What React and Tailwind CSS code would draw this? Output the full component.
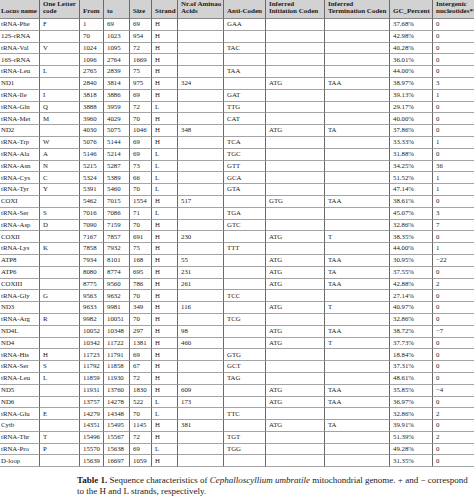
import React from "react";

const cols = "grid-cols-[42px_40px_24px_26px_22px_26px_46px_42px_59px_65px_43px_60px]";

const rows = [
  ["tRNA-Phe","F","1","69","69","H","","GAA","","","37.68%","0"],
  ["12S-rRNA","","70","1023","954","H","","","","","42.98%","0"],
  ["tRNA-Val","V","1024","1095","72","H","","TAC","","","40.28%","0"],
  ["16S-rRNA","","1096","2764","1669","H","","","","","36.01%","0"],
  ["tRNA-Leu","L","2765","2839","75","H","","TAA","","","44.00%","0"],
  ["ND1","","2840","3814","975","H","324","","ATG","TAA","38.97%","3"],
  ["tRNA-Ile","I","3818","3886","69","H","","GAT","","","39.13%","1"],
  ["tRNA-Gln","Q","3888","3959","72","L","","TTG","","","29.17%","0"],
  ["tRNA-Met","M","3960","4029","70","H","","CAT","","","40.00%","0"],
  ["ND2","","4030","5075","1046","H","348","","ATG","TA","37.86%","0"],
  ["tRNA-Trp","W","5076","5144","69","H","","TCA","","","33.33%","1"],
  ["tRNA-Ala","A","5146","5214","69","L","","TGC","","","31.88%","0"],
  ["tRNA-Asn","N","5215","5287","73","L","","GTT","","","34.25%","36"],
  ["tRNA-Cys","C","5324","5389","66","L","","GCA","","","51.52%","1"],
  ["tRNA-Tyr","Y","5391","5460","70","L","","GTA","","","47.14%","1"],
  ["COXI","","5462","7015","1554","H","517","","GTG","TAA","38.61%","0"],
  ["tRNA-Ser","S","7016","7086","71","L","","TGA","","","45.07%","3"],
  ["tRNA-Asp","D","7090","7159","70","H","","GTC","","","32.86%","7"],
  ["COXII","","7167","7857","691","H","230","","ATG","T","38.35%","0"],
  ["tRNA-Lys","K","7858","7932","75","H","","TTT","","","44.00%","1"],
  ["ATP8","","7934","8101","168","H","55","","ATG","TAA","30.95%","\u221222"],
  ["ATP6","","8080","8774","695","H","231","","ATG","TA","37.55%","0"],
  ["COXIII","","8775","9560","786","H","261","","ATG","TAA","42.88%","2"],
  ["tRNA-Gly","G","9563","9632","70","H","","TCC","","","27.14%","0"],
  ["ND3","","9633","9981","349","H","116","","ATG","T","40.97%","0"],
  ["tRNA-Arg","R","9982","10051","70","H","","TCG","","","32.86%","0"],
  ["ND4L","","10052","10348","297","H","98","","ATG","TAA","38.72%","\u22127"],
  ["ND4","","10342","11722","1381","H","460","","ATG","T","37.73%","0"],
  ["tRNA-His","H","11723","11791","69","H","","GTG","","","18.84%","0"],
  ["tRNA-Ser","S","11792","11858","67","H","","GCT","","","37.31%","0"],
  ["tRNA-Leu","L","11859","11930","72","H","","TAG","","","48.61%","0"],
  ["ND5","","11931","13760","1830","H","609","","ATG","TAA","35.85%","\u22124"],
  ["ND6","","13757","14278","522","L","173","","ATG","TAA","36.97%","0"],
  ["tRNA-Glu","E","14279","14348","70","L","","TTC","","","32.86%","2"],
  ["Cytb","","14351","15495","1145","H","381","","ATG","TA","39.91%","0"],
  ["tRNA-Thr","T","15496","15567","72","H","","TGT","","","51.39%","2"],
  ["tRNA-Pro","P","15570","15638","69","L","","TGG","","","49.28%","0"],
  ["D-loop","","15639","16697","1059","H","","","","","31.35%","0"],
];

const headers = [
  ["Locus name"],
  ["One Letter", "code"],
  ["From"],
  ["to"],
  ["Size"],
  ["Strand"],
  ["Nr.of Aminao", "Acids"],
  ["Anti-Coden"],
  ["Inferred", "Initiation Coden"],
  ["Inferred", "Termination Coden"],
  ["GC_Percent"],
  ["Intergenic", "nucleotides**"],
];

export default function App() {
  return (
    <div
      className="w-[474px] h-[500px] overflow-hidden bg-white text-[#1a1a1a]"
      style={{ fontFamily: '"Liberation Serif", "DejaVu Serif", serif' }}
    >
      <div className={`grid ${cols} ml-[-3px] w-max border-l border-[#6a6a6a]`}>
        {headers.map((h, i) => (
          <div
            key={"h" + i}
            className="h-[19px] bg-[#d2d2d2] border-r border-b border-r-[#6a6a6a] border-b-[#8a8a8a] flex flex-col justify-end pb-[2px] pl-[3px] text-[7px] leading-[7.6px] font-bold whitespace-nowrap overflow-hidden"
          >
            {h.map((t, j) => <span key={j}>{t}</span>)}
          </div>
        ))}
        {rows.map((r, ri) =>
          r.map((c, ci) => (
            <div
              key={ri + "-" + ci}
              className="h-[11.8px] border-r border-b-[1.5px] border-r-[#6a6a6a] border-b-[#a4a4a4] flex items-center pl-[3px] text-[6.8px] whitespace-nowrap overflow-hidden"
            >
              {c}
            </div>
          ))
        )}
      </div>
      <div className="ml-[77px] mt-[8px] text-[9px] leading-[11px] whitespace-nowrap">
        <div>
          <span className="font-bold">Table 1.</span>{" "}Sequence characteristics of{" "}
          <span className="italic">Cephalloscyllium umbratile</span> mitochondrial genome. + and &minus; correspond
        </div>
        <div>to the H and L strands, respectively.</div>
      </div>
    </div>
  );
}
